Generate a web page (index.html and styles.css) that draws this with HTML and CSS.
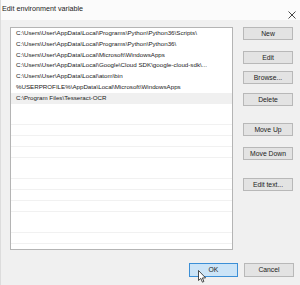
FILE: index.html
```html
<!DOCTYPE html>
<html>
<head>
<meta charset="utf-8">
<link rel="stylesheet" href="styles.css">
</head>
<body>
<div class="dialog">
  <div class="titlebar">
    <span class="title">Edit environment variable</span>
    <svg class="close" width="8" height="8" viewBox="0 0 8 8"><path d="M0.5 0.5 L7.5 7.5 M7.5 0.5 L0.5 7.5" stroke="#333" stroke-width="0.9" fill="none"/></svg>
  </div>
  <div class="content">
    <div class="list">
      <div class="row">C:\Users\User\AppData\Local\Programs\Python\Python36\Scripts\</div>
      <div class="row">C:\Users\User\AppData\Local\Programs\Python\Python36\</div>
      <div class="row">C:\Users\User\AppData\Local\Microsoft\WindowsApps</div>
      <div class="row">C:\Users\User\AppData\Local\Google\Cloud SDK\google-cloud-sdk\...</div>
      <div class="row">C:\Users\User\AppData\Local\atom\bin</div>
      <div class="row">%USERPROFILE%\AppData\Local\Microsoft\WindowsApps</div>
      <div class="row selected">C:\Program Files\Tesseract-OCR</div>
    </div>
    <div class="side">
      <button class="btn b-new">New</button>
      <button class="btn b-edit">Edit</button>
      <button class="btn b-browse">Browse...</button>
      <button class="btn b-delete">Delete</button>
      <button class="btn b-up">Move Up</button>
      <button class="btn b-down">Move Down</button>
      <button class="btn b-text">Edit text...</button>
    </div>
  </div>
  <div class="footer">
    <button class="btn primary">OK</button>
    <button class="btn">Cancel</button>
  </div>
  <svg class="cursor" width="9" height="13" viewBox="0 0 9 13"><path d="M0.5 0.5 L0.5 10.5 L2.8 8.4 L4.4 12.2 L5.9 11.5 L4.4 7.9 L7.6 7.9 Z" fill="#fff" stroke="#222" stroke-width="0.8" stroke-linejoin="round"/></svg>
</div>
</body>
</html>
```
FILE: styles.css
```css
html, body {
  margin: 0;
  padding: 0;
}
body {
  width: 300px;
  height: 285px;
  overflow: hidden;
  background: #f0f0f0;
  font-family: "Liberation Sans", Arial, sans-serif;
  color: #1a1a1a;
}
.dialog {
  position: relative;
  width: 300px;
  height: 285px;
  border-left: 1px solid #dcdcdc;
  box-sizing: border-box;
}
.titlebar {
  height: 20px;
  background: #fbfbfb;
  display: flex;
  justify-content: space-between;
  align-items: flex-start;
}
.title {
  font-size: 7.2px;
  padding: 4px 0 0 1px;
  color: #222;
}
.close {
  margin: 11px 4px 0 0;
}
.content {
  display: flex;
  padding: 7px 0 0 9px;
}
.list {
  width: 223px;
  height: 223px;
  box-sizing: border-box;
  border: 1px solid #b4b4b4;
  background-color: #fff;
  background-image: repeating-linear-gradient(to bottom, transparent 0, transparent 10px, #f1f1f1 10px, #f1f1f1 10.8px);
  overflow: hidden;
}
.row {
  height: 10.8px;
  line-height: 10.8px;
  font-size: 6.2px;
  white-space: nowrap;
  color: #1a1a1a;
  background: #fff;
  padding-left: 5px;
}
.row.selected {
  background: #f0f0f0;
}
.side {
  display: flex;
  flex-direction: column;
  margin-left: 10px;
}
.btn {
  width: 50px;
  height: 13px;
  box-sizing: border-box;
  border: 1px solid #b8b8b8;
  background: #e3e3e3;
  font-family: "Liberation Sans", Arial, sans-serif;
  font-size: 6.8px;
  color: #222;
  padding: 0;
  margin: 0;
  line-height: 11px;
  text-align: center;
}
.b-new { margin-top: 0; }
.b-edit { margin-top: 11px; }
.b-browse { margin-top: 7px; }
.b-delete { margin-top: 9px; }
.b-up { margin-top: 17px; }
.b-down { margin-top: 11px; }
.b-text { margin-top: 18px; }
.footer {
  display: flex;
  justify-content: flex-end;
  gap: 6px;
  padding: 13px 6px 0 0;
}
.footer .btn {
  height: 14px;
  line-height: 12px;
}
.btn.primary {
  width: 49px;
  background: #cce4f7;
  border-color: #3c8fd6;
}
.cursor {
  position: absolute;
  left: 197px;
  top: 270px;
}
```
